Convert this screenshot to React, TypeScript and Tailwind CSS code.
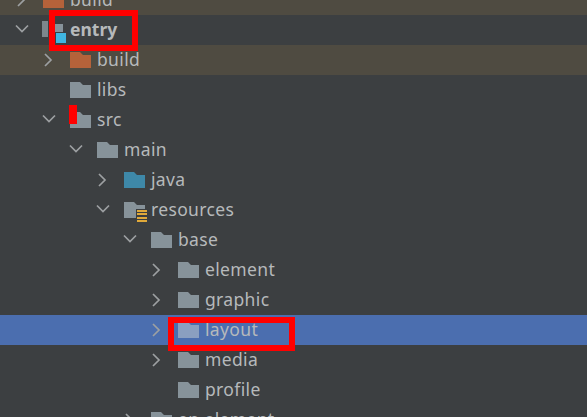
import React from 'react';

type Row = {
    name: string;
    depth: number;
    arrow?: 'open' | 'closed';
    icon?: 'module' | 'build' | 'java' | 'resources' | 'plain';
    bold?: boolean;
    excluded?: boolean;
    selected?: boolean;
};

const rows: Row[] = [
    { name: 'build', depth: 0, arrow: 'closed', icon: 'build', excluded: true },
    { name: 'entry', depth: 0, arrow: 'open', icon: 'module', bold: true },
    { name: 'build', depth: 1, arrow: 'closed', icon: 'build', excluded: true },
    { name: 'libs', depth: 1 },
    { name: 'src', depth: 1, arrow: 'open' },
    { name: 'main', depth: 2, arrow: 'open' },
    { name: 'java', depth: 3, arrow: 'closed', icon: 'java' },
    { name: 'resources', depth: 3, arrow: 'open', icon: 'resources' },
    { name: 'base', depth: 4, arrow: 'open' },
    { name: 'element', depth: 5, arrow: 'closed' },
    { name: 'graphic', depth: 5, arrow: 'closed' },
    { name: 'layout', depth: 5, arrow: 'closed', selected: true },
    { name: 'media', depth: 5, arrow: 'closed' },
    { name: 'profile', depth: 5 },
    { name: 'en.element', depth: 4, arrow: 'closed' },
];

function Chevron({ open }: { open: boolean }) {
    return (
        <svg width="18" height="16" viewBox="0 0 18 16" fill="none" stroke="#9da0a2" strokeWidth="1.7">
            {open ? <path d="M3 3.5 L9 9.5 L15 3.5" /> : <path d="M5 2 L11 8 L5 14" />}
        </svg>
    );
}

function Folder({ color }: { color: string }) {
    return (
        <svg width="21" height="16" viewBox="0 0 21 16" fill={color}>
            <path d="M0 0 H10 L13 3 H21 V16 H0 Z" />
        </svg>
    );
}

function ModuleIcon() {
    return (
        <svg width="24" height="26" viewBox="0 0 24 26" className="-ml-px">
            <rect x="0" y="4" width="6" height="16" fill="#7d878d" />
            <rect x="12" y="7" width="9" height="8" fill="#87939a" />
            <rect x="14" y="16" width="10" height="10" fill="#40b6e0" />
        </svg>
    );
}

function RowIcon({ icon, selected }: { icon: Row['icon']; selected?: boolean }) {
    if (icon === 'module') return <ModuleIcon />;
    if (icon === 'build') return <Folder color="#b5623a" />;
    if (icon === 'java') return <Folder color="#3e88a8" />;
    if (icon === 'resources') {
        return (
            <div className="relative h-4 w-[21px]">
                <Folder color="#87939a" />
                <div className="absolute left-[12px] top-[7px] flex h-[14px] w-[11px] flex-col justify-between bg-[#3c3f41] py-px pl-px">
                    <div className="h-[2px] bg-[#e0a93a]" />
                    <div className="h-[2px] bg-[#e0a93a]" />
                    <div className="h-[2px] bg-[#e0a93a]" />
                    <div className="h-[2px] bg-[#e0a93a]" />
                </div>
            </div>
        );
    }
    return <Folder color={selected ? '#8a9fc0' : '#87939a'} />;
}

export default function App() {
    return (
        <div className="relative h-[417px] w-[587px] overflow-hidden bg-[#3c3f41] font-['Noto_Sans',sans-serif] text-[17.5px] text-[#b6b9bb]">
            <div className="-mt-[15px]">
                {rows.map((row, i) => (
                    <div
                        key={i}
                        className={`flex h-[30px] items-center ${row.excluded ? 'bg-[#4f4b41]' : ''} ${row.selected ? 'bg-[#4b6eaf]' : ''}`}
                    >
                        <div style={{ width: 13 + row.depth * 27 }} className="shrink-0" />
                        <div className="w-[30px] shrink-0">{row.arrow && <Chevron open={row.arrow === 'open'} />}</div>
                        <div className="w-[27px] shrink-0">
                            <RowIcon icon={row.icon ?? 'plain'} selected={row.selected} />
                        </div>
                        <span className={`pb-[2px] ${row.bold ? 'font-bold' : 'tracking-[0.35px]'}`}>{row.name}</span>
                    </div>
                ))}
            </div>

            {/* red annotations drawn over the tree */}
            <div className="absolute left-[49px] top-[10px] h-[41px] w-[89px] border-[6px] border-[#ff0000]" />
            <div className="absolute left-[69px] top-[105px] h-[19px] w-[8px] bg-[#ff0000]" />
            <div className="absolute left-[168px] top-[317px] h-[34px] w-[127px] border-[6px] border-[#ff0000]" />
        </div>
    );
}
